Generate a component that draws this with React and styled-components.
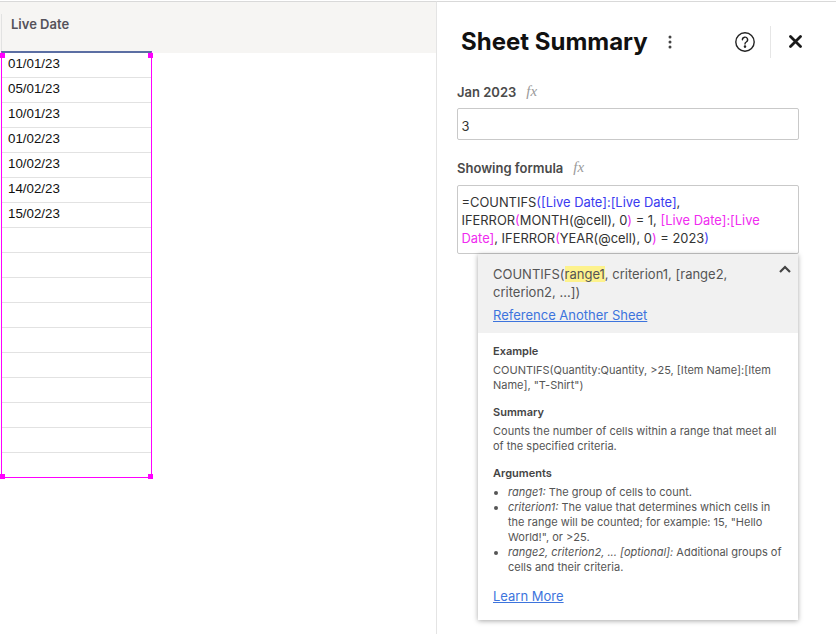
import styled, { createGlobalStyle } from "styled-components";

const GlobalStyle = createGlobalStyle`
  html, body {
    margin: 0;
    padding: 0;
    background: #fff;
    overflow: hidden;
  }
  body {
    font-family: Inter, "Liberation Sans", sans-serif;
  }
`;

const Page = styled.div`
  display: flex;
  width: 836px;
  height: 634px;
  padding-top: 1px;
  box-sizing: border-box;
  overflow: hidden;
`;

const GridArea = styled.div`
  width: 436px;
  flex: none;
  border-top: 1px solid #d9d9d9;
  box-sizing: border-box;
`;

const GridHeader = styled.div`
  height: 51px;
  background: #f6f5f3;
  padding: 12px 0 0 1px;
  box-sizing: border-box;
`;

const HeaderCell = styled.div`
  height: 39px;
  border-left: 1px solid #e2e2e2;
  padding: 2px 0 0 9px;
  box-sizing: border-box;
  font: 600 13px/16px Inter, sans-serif;
  color: #55525a;
`;

const Column = styled.div`
  position: relative;
  width: 151px;
  margin-left: 1px;
`;

const Row = styled.div`
  height: 25px;
  box-sizing: border-box;
  border-bottom: 1px solid #e2e2e2;
  padding: 3px 0 0 7px;
  font: 13.33px/16px "Liberation Sans", Arial, sans-serif;
  color: #111;
`;

const Selection = styled.div`
  position: absolute;
  top: -2px;
  left: 0;
  right: 0;
  height: 427px;
  box-sizing: border-box;
  border: 1px solid #f0f;
  border-top: 2px solid #5b6ea3;
  pointer-events: none;
`;

const Handle = styled.span`
  position: absolute;
  width: 5px;
  height: 5px;
  background: #f0f;
  ${(p) => (p.$bottom ? "bottom: -2px;" : "top: 0;")}
  ${(p) => (p.$right ? "right: -2px;" : "left: -2px;")}
`;

const Panel = styled.aside`
  flex: 1;
  border-left: 1px solid #e4e4e4;
  border-top: 1px solid #d9d9d9;
  padding: 0 37px 0 20px;
`;

const PanelHead = styled.div`
  display: flex;
  align-items: center;
  height: 81px;
  padding: 0 0 2px 4px;
  box-sizing: border-box;
`;

const Title = styled.h1`
  margin: 0;
  font: 700 24px/30px Inter, sans-serif;
  color: #111;
`;

const IconBtn = styled.button`
  display: flex;
  align-items: center;
  justify-content: center;
  padding: 0;
  border: 0;
  background: none;
`;

const Kebab = styled(IconBtn)`
  margin-left: 20px;
`;

const Help = styled(IconBtn)`
  margin-left: auto;
  margin-right: 15px;
`;

const Divider = styled.span`
  width: 1px;
  height: 32px;
  background: #e6e6e6;
  margin-right: 18px;
`;

const Close = styled(IconBtn)`
  margin-right: -3px;
`;

const Label = styled.div`
  display: flex;
  align-items: center;
  gap: 10px;
  font: 600 13px/18px Inter, sans-serif;
  color: #4a4a4a;
  margin-bottom: ${(p) => p.$gap}px;
`;

const Fx = styled.span`
  font: italic 400 15px/14px "Liberation Serif", serif;
  color: #9a9a9a;
  position: relative;
  top: -1px;
`;

const Field = styled.div`
  border: 1px solid #c9c9c9;
  border-radius: 2px;
  box-sizing: border-box;
  width: 342px;
  padding: 0 3.5px;
  font: 400 12.9px/18px Inter, sans-serif;
  color: #333;
`;

const ValueField = styled(Field)`
  height: 32px;
  padding-top: 9px;
  margin-bottom: 19px;
`;

const FormulaField = styled(Field)`
  height: 69px;
  padding-top: 8px;
`;

const Tok = styled.span`
  color: ${(p) => p.$c};
`;

const FunctionCard = styled.div`
  width: 320px;
  margin-left: 21px;
  background: #fff;
  box-shadow: 0 1px 5px rgba(0, 0, 0, 0.35);
`;

const CardTop = styled.div`
  position: relative;
  background: #f1f1f1;
  padding: 11px 40px 8px 15px;
  height: 79px;
  box-sizing: border-box;
  font: 400 13px/18px Inter, sans-serif;
  color: #555;
`;

const Mark = styled.span`
  background: #fdf28d;
`;

const CardLink = styled.a`
  display: block;
  color: #3d74dd;
  text-decoration: underline;
`;

const TopLink = styled(CardLink)`
  margin-top: 5px;
`;

const Chevron = styled.span`
  position: absolute;
  top: 11px;
  right: 6px;
  display: flex;
`;

const CardBody = styled.div`
  padding: 11px 15px 0;
  height: 287px;
  box-sizing: border-box;
`;

const SectionTitle = styled.div`
  font: 600 11px/15px Inter, sans-serif;
  color: #444;
  margin-bottom: 4px;
`;

const Text = styled.div`
  font: 400 11px/15px Inter, sans-serif;
  color: #555;
  margin-bottom: 12px;
`;

const Args = styled.ul`
  margin: 0 0 12px;
  padding: 0 0 0 15px;
  font: 400 11px/15px Inter, sans-serif;
  color: #555;
`;

const BottomLink = styled(CardLink)`
  font: 400 13px/18px Inter, sans-serif;
`;

const dates = ["01/01/23", "05/01/23", "10/01/23", "01/02/23", "10/02/23", "14/02/23", "15/02/23"];
const rows = Array.from({ length: 17 }, (_, i) => dates[i] || "");

const BLUE = "#3a3af0";
const PINK = "#f02cf0";

const App = () => {
  return (
    <Page>
      <GlobalStyle />
      <GridArea>
        <GridHeader>
          <HeaderCell>Live Date</HeaderCell>
        </GridHeader>
        <Column>
          {rows.map((d, i) => (
            <Row key={i}>{d}</Row>
          ))}
          <Selection>
            <Handle />
            <Handle $right />
            <Handle $bottom />
            <Handle $bottom $right />
          </Selection>
        </Column>
      </GridArea>
      <Panel>
        <PanelHead>
          <Title>Sheet Summary</Title>
          <Kebab>
            <svg width="4" height="14" viewBox="0 0 4 14" fill="#444">
              <circle cx="2" cy="2" r="1.5" />
              <circle cx="2" cy="7" r="1.5" />
              <circle cx="2" cy="12" r="1.5" />
            </svg>
          </Kebab>
          <Help>
            <svg width="20" height="20" viewBox="0 0 20 20" fill="none" stroke="#222" strokeWidth="1.4">
              <circle cx="10" cy="10" r="9.2" />
              <path d="M7.4 7.8a2.6 2.6 0 1 1 3.9 2.2c-.9.5-1.3 1-1.3 2" strokeLinecap="round" />
              <circle cx="10" cy="14.6" r=".6" fill="#222" />
            </svg>
          </Help>
          <Divider />
          <Close>
            <svg width="13" height="13" viewBox="0 0 13 13" stroke="#1a1a1a" strokeWidth="2.8" strokeLinecap="round">
              <path d="M1.5 1.5l10 10M11.5 1.5l-10 10" />
            </svg>
          </Close>
        </PanelHead>
        <Label $gap={7}>
          Jan 2023 <Fx>fx</Fx>
        </Label>
        <ValueField>3</ValueField>
        <Label $gap={8}>
          Showing formula <Fx>fx</Fx>
        </Label>
        <FormulaField>
          =COUNTIFS<Tok $c={BLUE}>(</Tok>
          <Tok $c={BLUE}>[Live Date]:[Live Date]</Tok>,{" "}
          IFERROR<Tok $c={PINK}>(</Tok>MONTH(@cell), 0<Tok $c={PINK}>)</Tok> = 1,{" "}
          <Tok $c={PINK}>[Live Date]:[Live</Tok> <Tok $c={PINK}>Date]</Tok>, IFERROR<Tok $c={PINK}>(</Tok>YEAR(@cell), 0
          <Tok $c={PINK}>)</Tok> = 2023<Tok $c={BLUE}>)</Tok>
        </FormulaField>
        <FunctionCard>
          <CardTop>
            COUNTIFS(<Mark>range1</Mark>, criterion1, [range2, criterion2, ...])
            <TopLink>Reference Another Sheet</TopLink>
            <Chevron>
              <svg width="14" height="9" viewBox="0 0 14 9" fill="none" stroke="#444" strokeWidth="2.2">
                <path d="M2 7l5-5 5 5" />
              </svg>
            </Chevron>
          </CardTop>
          <CardBody>
            <SectionTitle>Example</SectionTitle>
            <Text>COUNTIFS(Quantity:Quantity, &gt;25, [Item Name]:[Item Name], "T-Shirt")</Text>
            <SectionTitle>Summary</SectionTitle>
            <Text>Counts the number of cells within a range that meet all of the specified criteria.</Text>
            <SectionTitle>Arguments</SectionTitle>
            <Args>
              <li>
                <em>range1:</em> The group of cells to count.
              </li>
              <li>
                <em>criterion1:</em> The value that determines which cells in the range will be counted; for
                example: 15, "Hello World!", or &gt;25.
              </li>
              <li>
                <em>range2, criterion2, ... [optional]:</em> Additional groups of cells and their criteria.
              </li>
            </Args>
            <BottomLink>Learn More</BottomLink>
          </CardBody>
        </FunctionCard>
      </Panel>
    </Page>
  );
};

export default App;
